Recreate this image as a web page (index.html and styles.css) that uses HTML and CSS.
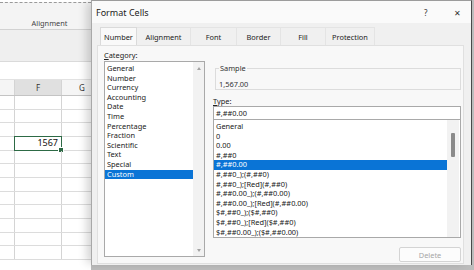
FILE: index.html
```html
<!DOCTYPE html>
<html lang="en">
<head>
    <meta charset="UTF-8">
    <title>Format Cells</title>
    <link rel="stylesheet" href="styles.css">
</head>
<body>
    <div class="screen">
        <!-- Excel sheet behind the dialog -->
        <div class="sheet">
            <div class="ribbon"><span>Alignment</span></div>
            <div class="ribbon-strip"></div>
            <div class="formula-bar"></div>
            <div class="grid-row head">
                <div class="c0"></div>
                <div class="c1 sel">F</div>
                <div class="c2">G</div>
            </div>
            <div class="grid-row"><div class="c0"></div><div class="c1"></div><div class="c2"></div></div>
            <div class="grid-row"><div class="c0"></div><div class="c1"></div><div class="c2"></div></div>
            <div class="grid-row"><div class="c0"></div><div class="c1"></div><div class="c2"></div></div>
            <div class="grid-row"><div class="c0"></div><div class="c1 active">1567<i class="handle"></i></div><div class="c2"></div></div>
            <div class="grid-row"><div class="c0"></div><div class="c1"></div><div class="c2"></div></div>
            <div class="grid-row"><div class="c0"></div><div class="c1"></div><div class="c2"></div></div>
            <div class="grid-row"><div class="c0"></div><div class="c1"></div><div class="c2"></div></div>
            <div class="grid-row"><div class="c0"></div><div class="c1"></div><div class="c2"></div></div>
            <div class="grid-row"><div class="c0"></div><div class="c1"></div><div class="c2"></div></div>
            <div class="grid-row"><div class="c0"></div><div class="c1"></div><div class="c2"></div></div>
            <div class="grid-row"><div class="c0"></div><div class="c1"></div><div class="c2"></div></div>
            <div class="grid-row"><div class="c0"></div><div class="c1"></div><div class="c2"></div></div>
        </div>

        <!-- Format Cells dialog -->
        <div class="dialog">
            <div class="titlebar">
                <span class="title">Format Cells</span>
                <span class="help">?</span>
                <span class="close">&#x2715;</span>
            </div>
            <div class="tabs">
                <div class="tab active">Number</div>
                <div class="tab t-align">Alignment</div>
                <div class="tab t-font">Font</div>
                <div class="tab t-border">Border</div>
                <div class="tab t-fill">Fill</div>
                <div class="tab t-prot">Protection</div>
            </div>
            <div class="panel">
                <div class="left">
                    <div class="label"><u>C</u>ategory:</div>
                    <div class="listbox cat">
                        <ul class="items">
                            <li>General</li>
                            <li>Number</li>
                            <li>Currency</li>
                            <li>Accounting</li>
                            <li>Date</li>
                            <li>Time</li>
                            <li>Percentage</li>
                            <li>Fraction</li>
                            <li>Scientific</li>
                            <li>Text</li>
                            <li>Special</li>
                            <li class="selected">Custom</li>
                        </ul>
                        <div class="scroll arrows">
                            <span class="up"></span>
                            <span class="down"></span>
                        </div>
                    </div>
                </div>
                <div class="right">
                    <fieldset class="sample">
                        <legend>Sample</legend>
                        <div class="sample-value">1,567.00</div>
                    </fieldset>
                    <div class="label type-label"><u>T</u>ype:</div>
                    <div class="type-input">#,##0.00</div>
                    <div class="listbox types">
                        <ul class="items">
                            <li>General</li>
                            <li>0</li>
                            <li>0.00</li>
                            <li>#,##0</li>
                            <li class="selected">#,##0.00</li>
                            <li>#,##0_);(#,##0)</li>
                            <li>#,##0_);[Red](#,##0)</li>
                            <li>#,##0.00_);(#,##0.00)</li>
                            <li>#,##0.00_);[Red](#,##0.00)</li>
                            <li>$#,##0_);($#,##0)</li>
                            <li>$#,##0_);[Red]($#,##0)</li>
                            <li>$#,##0.00_);($#,##0.00)</li>
                        </ul>
                        <div class="scroll">
                            <span class="thumb"></span>
                        </div>
                    </div>
                    <div class="actions">
                        <button class="delete" disabled>Delete</button>
                    </div>
                </div>
            </div>
        </div>
    </div>
</body>
</html>
```

FILE: styles.css
```css
html, body {
    margin: 0;
    padding: 0;
}
body {
    width: 474px;
    height: 270px;
    overflow: hidden;
    background: #bdbdbd;
    font-family: "Noto Sans", "Open Sans", sans-serif;
    font-size: 7.4px;
    color: #1a1a1a;
}
.screen {
    display: flex;
    height: 270px;
}

/* Excel sheet */
.sheet {
    width: 91px;
    flex-shrink: 0;
    background: #fff;
    overflow: hidden;
}
.ribbon {
    height: 28px;
    margin-top: 2px;
    border-top: 1px dashed #9a9a9a;
    border-bottom: 1px solid #d2d2d2;
    background: #f4f4f4;
    display: flex;
    align-items: flex-end;
    justify-content: center;
    padding-left: 8px;
    box-sizing: border-box;
    color: #444;
}
.ribbon span {
    padding-bottom: 1px;
}
.ribbon-strip {
    height: 32px;
    background: #efefef;
    border-bottom: 1px solid #dadada;
    box-sizing: border-box;
}
.formula-bar {
    height: 18px;
    background: #fff;
    border-bottom: 1px solid #e2e2e2;
    box-sizing: border-box;
}
.grid-row {
    display: flex;
    height: 13.67px;
    border-bottom: 1px solid #dcdcdc;
    box-sizing: border-box;
}
.grid-row.head {
    height: 16px;
    background: #f5f5f5;
    border-bottom: 1px solid #c4c4c4;
    color: #333;
    font-size: 8px;
}
.c0 {
    width: 14px;
    border-right: 1px solid #d4d4d4;
    flex-shrink: 0;
}
.c1 {
    width: 46px;
    border-right: 1px solid #d4d4d4;
    flex-shrink: 0;
    position: relative;
}
.c2 {
    flex: 1;
}
.head .c1, .head .c2 {
    display: flex;
    align-items: center;
}
.head .c1 {
    justify-content: center;
    background: #e0e0e0;
}
.head .c2 {
    padding-left: 17px;
}
.c1.active {
    border: 1.5px solid #2d6a45;
    margin: -1px 0 -1px -1px;
    width: 48px;
    box-sizing: border-box;
    text-align: right;
    padding-right: 3px;
    font-family: "Noto Sans", sans-serif;
    font-size: 9px;
    line-height: 12px;
    color: #111;
}
.handle {
    position: absolute;
    right: -3px;
    bottom: -3px;
    width: 4px;
    height: 4px;
    background: #2d6a45;
    border: 1px solid #fff;
}

/* Dialog */
.dialog {
    width: 381px;
    height: 265px;
    flex-shrink: 0;
    background: #f0f0f0;
    border-left: 1px solid #a8a8a8;
    border-right: 1px solid #4a4a4a;
    border-top: 1px solid #9c9c9c;
    box-sizing: border-box;
    box-shadow: -6px 0 9px -2px rgba(0, 0, 0, 0.18);
    display: flex;
    flex-direction: column;
    position: relative;
}
.titlebar {
    height: 22px;
    background: #fafafa;
    display: flex;
    align-items: center;
    padding: 0 0 0 4px;
    flex-shrink: 0;
}
.title {
    font-size: 9px;
    flex: 1;
    color: #1a1a1a;
}
.help {
    font-size: 8px;
    color: #333;
    width: 30px;
}
.close {
    font-size: 8px;
    color: #333;
    width: 17px;
}
.tabs {
    display: flex;
    padding: 4px 0 0 8px;
    height: 22px;
    box-sizing: border-box;
}
.tab {
    height: 18px;
    display: flex;
    align-items: center;
    justify-content: center;
    box-sizing: border-box;
    border: 1px solid #e4e4e4;
    border-bottom: none;
    border-left: none;
    color: #222;
}
.tab.active {
    width: 37px;
    background: #f9f9f9;
    border: 1px solid #dadada;
    border-bottom: none;
}
.t-align { width: 54px; }
.t-font { width: 46px; }
.t-border { width: 44px; }
.t-fill { width: 45px; }
.t-prot { width: 49px; }

.panel {
    flex: 1;
    margin: 0 7px 0 5px;
    background: #f8f8f8;
    border: 1px solid #e0e0e0;
    display: flex;
    gap: 8px;
    padding: 5px 0 0 6px;
    margin-bottom: 1px;
}
.label {
    height: 9px;
    line-height: 9px;
    color: #222;
}
.left {
    width: 101px;
    display: flex;
    flex-direction: column;
}
.listbox {
    background: #fff;
    border: 1px solid #a9a9a9;
    display: flex;
    box-sizing: border-box;
}
.listbox.cat {
    margin-top: 1px;
    height: 196px;
}
.items {
    list-style: none;
    margin: 0;
    padding: 2px 0 0 0;
    flex: 1;
}
.items li {
    height: 9.6px;
    line-height: 9.6px;
    padding-left: 2px;
    white-space: nowrap;
    color: #1a1a1a;
}
.items li.selected {
    background: #0a74d6;
    color: #fff;
}
.scroll {
    width: 11px;
    background: #f2f2f2;
    display: flex;
    flex-direction: column;
    align-items: center;
}
.arrows {
    justify-content: space-between;
    padding: 5px 0 4px;
}
.up, .down {
    width: 0;
    height: 0;
    border-left: 2.5px solid transparent;
    border-right: 2.5px solid transparent;
}
.up {
    border-bottom: 3px solid #a3a3a3;
}
.down {
    border-top: 3px solid #a3a3a3;
}

.right {
    width: 248px;
    display: flex;
    flex-direction: column;
    padding-left: 0;
}
.sample {
    margin: 14px 0 0 2px;
    padding: 0 0 4px 3px;
    border: 1px solid #dcdcdc;
    min-width: 0;
    height: 25px;
    box-sizing: border-box;
}
.sample legend {
    padding: 0 1px;
    color: #333;
    line-height: 7px;
}
.sample-value {
    padding-top: 7px;
    color: #333;
}
.type-label {
    margin-top: 7px;
    height: 9px;
}
.type-input {
    height: 14px;
    line-height: 13px;
    background: #fff;
    border: 1px solid #a9a9a9;
    padding-left: 2px;
    box-sizing: border-box;
}
.listbox.types {
    height: 118px;
    border-top: none;
}
.types .scroll {
    width: 12px;
    margin-right: 1px;
}
.thumb {
    width: 4px;
    height: 24px;
    margin-top: 13px;
    background: #8a8a8a;
    border-radius: 1px;
}
.actions {
    display: flex;
    justify-content: flex-end;
    margin-top: 9px;
}
.delete {
    width: 62px;
    height: 15px;
    background: #fcfcfc;
    border: 1px solid #d4d4d4;
    border-radius: 2px;
    font-family: "Noto Sans", sans-serif;
    font-size: 7.4px;
    color: #a6a6a6;
    padding: 0;
}
```
